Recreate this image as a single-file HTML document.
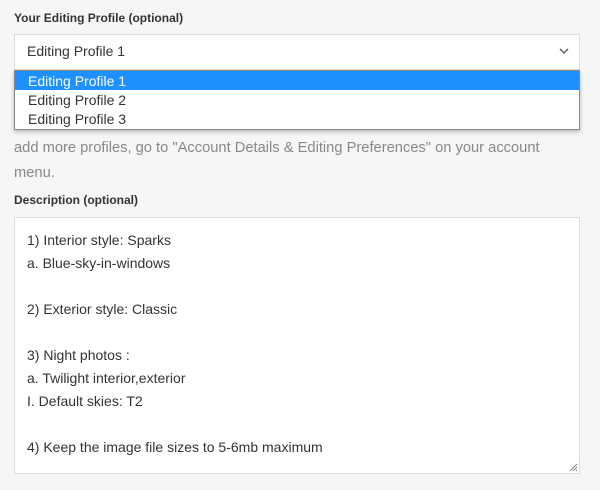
<!DOCTYPE html>
<html><head><style>
body{margin:0;width:600px;height:490px;background:#f6f6f6;font-family:"Liberation Sans",sans-serif;position:relative;overflow:hidden;color:#333}
.a{position:absolute}
.lbl{font-size:12px;font-weight:bold;color:#333}
</style></head><body>
<div class="a lbl" style="left:14px;top:11px">Your Editing Profile (optional)</div>
<div class="a" style="left:14px;top:34px;width:564px;height:34px;background:#fff;border:1px solid #ddd"></div>
<div class="a" style="left:27px;top:43px;font-size:14px;color:#333">Editing Profile 1</div>
<svg class="a" style="left:559px;top:47px" width="10" height="8"><path d="M1 2 L5 6 L9 2" stroke="#555" stroke-width="1.3" fill="none"/></svg>
<div class="a" style="left:14px;top:70px;width:564px;height:58px;background:#fff;border:1px solid #888;box-shadow:0 2px 4px rgba(0,0,0,.25)"></div>
<div class="a" style="left:15px;top:71px;width:564px;height:19px;background:#1e90ff"></div>
<div class="a" style="left:28px;top:72px;font-size:14px;line-height:19px;color:#fff">Editing Profile 1</div>
<div class="a" style="left:28px;top:91px;font-size:14px;line-height:19px;color:#333">Editing Profile 2</div>
<div class="a" style="left:28px;top:110px;font-size:14px;line-height:19px;color:#333">Editing Profile 3</div>
<div class="a" style="left:14px;top:136px;font-size:14.7px;line-height:25px;color:#888;width:580px">add more profiles, go to "Account Details &amp; Editing Preferences" on your account<br>menu.</div>
<div class="a lbl" style="left:14px;top:193px">Description (optional)</div>
<div class="a" style="left:14px;top:217px;width:564px;height:255px;background:#fff;border:1px solid #ddd"></div>
<div class="a" style="left:27px;top:229px;font-size:14px;line-height:23px;color:#333">1) Interior style: Sparks<br>a. Blue-sky-in-windows<br><br>2) Exterior style: Classic<br><br>3) Night photos :<br>a. Twilight interior,exterior<br>I. Default skies: T2<br><br>4) Keep the image file sizes to 5-6mb maximum</div>
<svg class="a" style="left:569px;top:463px" width="9" height="9"><path d="M1 8 L8 1 M4 8 L8 4 M7 8 L8 7" stroke="#888" stroke-width="1"/></svg>
</body></html>
